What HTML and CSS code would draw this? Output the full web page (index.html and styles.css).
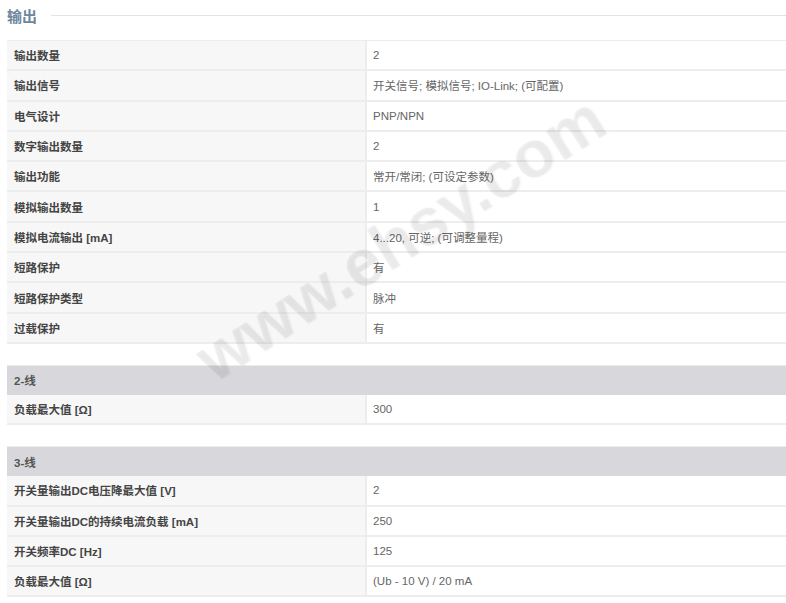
FILE: index.html
```html
<!DOCTYPE html>
<html lang="zh-CN">
<head>
	<meta charset="UTF-8">
	<meta name="viewport" content="width=device-width, initial-scale=1.0">
	<title>输出</title>
	<link rel="stylesheet" href="styles.css">
</head>
<body>
	<div class="page">
		<div class="section-title">
			<h3>输出</h3>
			<span class="rule"></span>
		</div>

		<table class="spec">
			<tr><th>输出数量</th><td>2</td></tr>
			<tr><th>输出信号</th><td>开关信号; 模拟信号; IO-Link; (可配置)</td></tr>
			<tr><th>电气设计</th><td>PNP/NPN</td></tr>
			<tr><th>数字输出数量</th><td>2</td></tr>
			<tr><th>输出功能</th><td>常开/常闭; (可设定参数)</td></tr>
			<tr><th>模拟输出数量</th><td>1</td></tr>
			<tr><th>模拟电流输出 [mA]</th><td>4...20, 可逆; (可调整量程)</td></tr>
			<tr><th>短路保护</th><td>有</td></tr>
			<tr><th>短路保护类型</th><td>脉冲</td></tr>
			<tr><th>过载保护</th><td>有</td></tr>
		</table>

		<table class="spec">
			<tr class="group"><th colspan="2">2-线</th></tr>
			<tr><th>负载最大值 [Ω]</th><td>300</td></tr>
		</table>

		<table class="spec">
			<tr class="group"><th colspan="2">3-线</th></tr>
			<tr><th>开关量输出DC电压降最大值 [V]</th><td>2</td></tr>
			<tr><th>开关量输出DC的持续电流负载 [mA]</th><td>250</td></tr>
			<tr><th>开关频率DC [Hz]</th><td>125</td></tr>
			<tr><th>负载最大值 [Ω]</th><td>(Ub - 10 V) / 20 mA</td></tr>
		</table>

		<div class="watermark">www.ehsy.com</div>
	</div>
</body>
</html>
```

FILE: styles.css
```css
* {
	box-sizing: border-box;
}

html, body {
	overflow: hidden;
}

body {
	margin: 0;
	padding: 0;
	font-family: "Liberation Sans", "Noto Sans CJK SC", sans-serif;
	font-size: 11.5px;
	color: #666;
	background-color: #fff;
}

.page {
	position: relative;
	width: 800px;
	padding: 5px 0 0 7px;
}

.section-title {
	display: flex;
	align-items: center;
	gap: 14px;
	height: 20px;
	margin-bottom: 15px;
}

.section-title h3 {
	margin: 0;
	font-size: 15px;
	font-weight: bold;
	color: #6f879c;
}

.section-title .rule {
	flex: 1;
	height: 1px;
	background-color: #e3e3e3;
}

.spec {
	width: 100%;
	border-collapse: separate;
	border-spacing: 0;
	border-top: 1px solid #ececec;
	margin-bottom: 21px;
}

.spec th,
.spec td {
	height: 30.3px;
	padding: 0 6px;
	border-bottom: 2px solid #ededed;
	text-align: left;
	vertical-align: middle;
	white-space: nowrap;
}

.spec th {
	width: 360px;
	padding-left: 7px;
	font-weight: bold;
	color: #444;
	background-color: #f7f7f7;
	border-right: 2px solid #ededed;
}

.spec td {
	color: #666;
	background-color: #fff;
}

.spec .group th {
	width: auto;
	height: 29px;
	color: #555;
	background-color: #d8d8dc;
	border-right: none;
	border-bottom: none;
}

.watermark {
	position: absolute;
	left: 165px;
	top: 200px;
	font-size: 66px;
	font-weight: bold;
	color: rgba(0, 0, 0, .045);
	text-shadow: 1px 1px 2px rgba(0, 0, 0, .04);
	transform: rotate(-32.5deg);
	pointer-events: none;
	white-space: nowrap;
}
```
